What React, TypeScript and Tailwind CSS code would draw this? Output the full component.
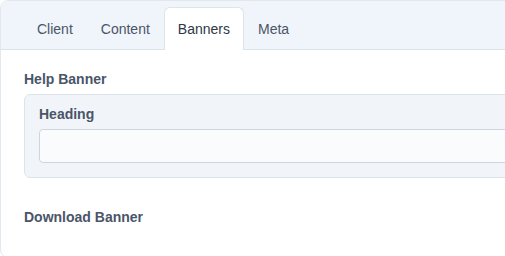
import React from "react";

const tabs = ["Client", "Content", "Banners", "Meta"];

export default function App() {
  const active = "Banners";
  return (
    <div className="w-[505px] h-[256px] overflow-hidden bg-white" style={{ fontFamily: '"Liberation Sans", Arial, sans-serif' }}>
      <div className="w-[600px] h-[258px] rounded-lg border border-[#e3e8ef] bg-white overflow-hidden">
        <div className="flex h-[49px] items-end border-b border-[#dde3ea] bg-[#f0f4fb] pl-[22px]">
          {tabs.map((t) => (
            <button
              key={t}
              type="button"
              className={`-mb-px h-[43px] px-[13px] pt-[1px] text-[14px] ${
                t === active
                  ? "rounded-t-md border border-b-0 border-[#dde3ea] bg-white text-[#2d3748]"
                  : "border border-transparent text-[#4a5568]"
              }`}
            >
              {t}
            </button>
          ))}
        </div>
        <div className="px-[23px] pt-[19px]">
          <div className="text-[14px] leading-[20px] font-bold text-[#4a5568]">Help Banner</div>
          <div className="mt-[5px] rounded-md border border-[#dde3ea] bg-[#f1f5f9] px-[14px] pt-[9px] pb-[14px]">
            <div className="text-[14px] leading-[20px] font-bold text-[#4a5568]">Heading</div>
            <div className="mt-[5px] h-[34px] rounded border border-[#cdd5df] bg-[#f9fbfd]"></div>
          </div>
          <div className="mt-[29px] text-[14px] leading-[20px] font-bold text-[#4a5568]">Download Banner</div>
        </div>
      </div>
    </div>
  );
}
